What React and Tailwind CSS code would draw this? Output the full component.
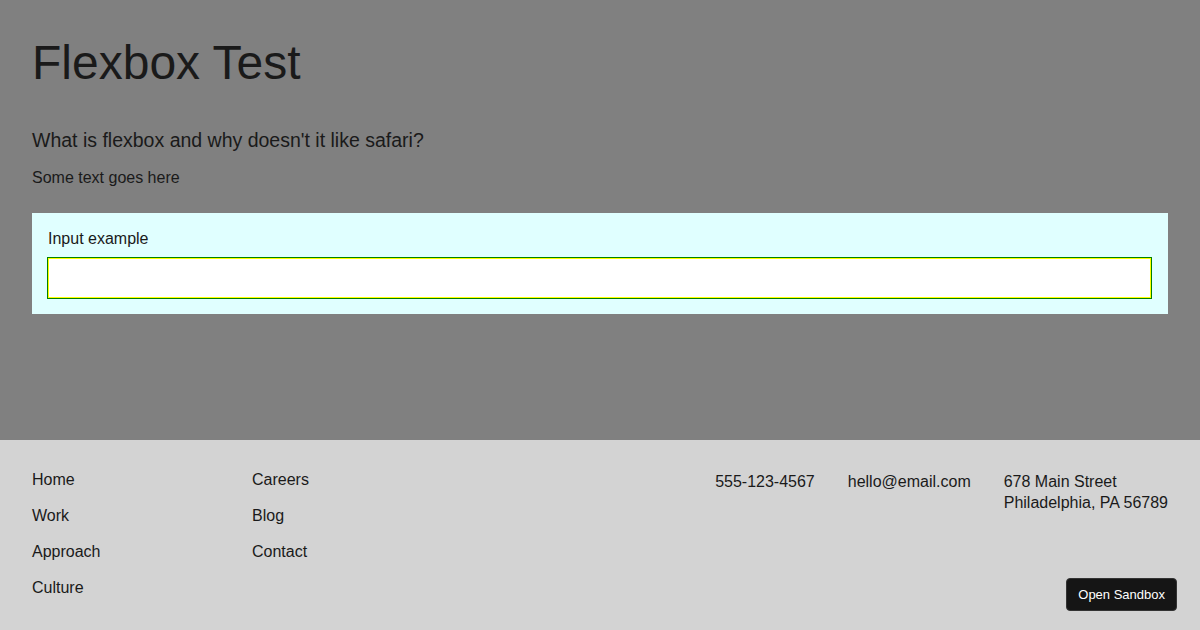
import React from "react";

const leftLinks = ["Home", "Work", "Approach", "Culture"];
const rightLinks = ["Careers", "Blog", "Contact"];

const App = () => {
  return (
    <div className="relative flex flex-col h-[630px] w-full text-[#1a1a1a] font-['Liberation_Sans',Arial,sans-serif]">
      <main className="h-[440px] bg-[#808080] px-8 pt-8">
        <h1 className="text-[48px] leading-[1.2] pt-[2px]">Flexbox Test</h1>
        <h2 className="text-[19.5px] leading-[24px] mt-[36px]">
          What is flexbox and why doesn't it like safari?
        </h2>
        <p className="text-[16px] leading-[1.2] mt-[16px]">Some text goes here</p>
        <div className="mt-[26px] bg-[#e0ffff] px-4 pt-4 pb-[15px]">
          <label className="block text-[16px] leading-[19px] mb-[9px]">Input example</label>
          <input
            type="text"
            className="block w-[calc(100%+1px)] -ml-px h-[42px] bg-white border border-[#008000] shadow-[inset_0_0_0_1px_#ffff00] outline-none"
          />
        </div>
      </main>

      <footer className="flex-1 bg-[#d3d3d3] px-8 pt-[31px] flex justify-between">
        <div className="flex">
          <ul className="w-[220px] flex flex-col gap-[18px] text-[16px] leading-[18px]">
            {leftLinks.map((l) => (
              <li key={l}>{l}</li>
            ))}
          </ul>
          <ul className="flex flex-col gap-[18px] text-[16px] leading-[18px]">
            {rightLinks.map((l) => (
              <li key={l}>{l}</li>
            ))}
          </ul>
        </div>
        <div className="flex gap-[33px] text-[16px] leading-[21px]">
          <div>555-123-4567</div>
          <div>hello@email.com</div>
          <div>
            678 Main Street
            <br />
            Philadelphia, PA 56789
          </div>
        </div>
      </footer>

      <button className="absolute right-[23px] bottom-[19px] h-[33px] px-[11px] rounded-[4px] bg-[#151515] border border-[#333] text-white text-[13px] font-['Liberation_Sans',Arial,sans-serif]">
        Open Sandbox
      </button>
    </div>
  );
};

export default App;
